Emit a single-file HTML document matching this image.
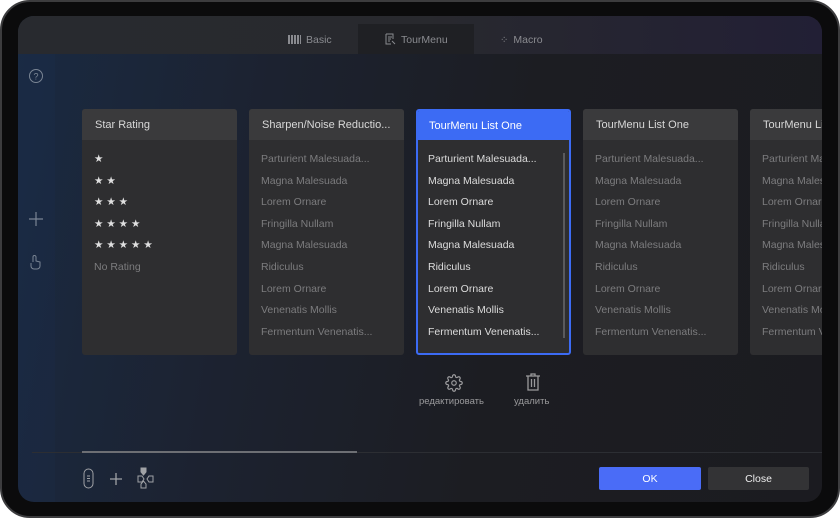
<!DOCTYPE html>
<html><head><meta charset="utf-8"><style>
*{margin:0;padding:0;box-sizing:border-box}
body{width:840px;height:518px;background:#fff;font-family:"Liberation Sans",sans-serif;overflow:hidden;position:relative}
.frame{position:absolute;left:0;top:0;width:840px;height:518px;border-radius:30px;background:#0b0b0c;border:2px solid #3c3c3e}
.screen{position:absolute;left:18px;top:16px;width:804px;height:486px;border-radius:16px;overflow:hidden;background:linear-gradient(100deg,#1a2a42 0%,#1c2230 30%,#1c1d22 60%,#1b1b20 100%)}
.tabbar{position:absolute;left:0;top:0;width:804px;height:38px;background:linear-gradient(90deg,#282a2f 0%,#28292e 50%,#221f35 100%)}
.tab{position:absolute;top:0;height:38px;color:#8a8b90;font-size:10.5px;line-height:48px}
.tab.act{background:#1f2024;top:8px;height:30px;line-height:32px}
.side{position:absolute;left:0;top:38px;width:37px;height:448px;background:rgba(40,70,110,.08)}
.card{position:absolute;top:93px;width:155px;height:246px;background:#2e2e30;border-radius:3px;overflow:hidden}
.card .h{height:31px;background:#3a3a3c;color:#d8d8d8;font-size:11px;line-height:33px;padding-left:13px;white-space:nowrap}
.card ul{list-style:none;padding-top:12px}
.card li{height:21.6px;font-size:10.5px;color:#7c7c7e;padding-left:12px;line-height:14px;white-space:nowrap}
.card.s li{color:#e0e0e0}
.card.a{border:2px solid #3c6bf4}
.card.a .h{background:#3c6bf4;color:#fff;height:29px;line-height:31px;padding-left:11px}
.card.a ul{padding-top:12px}
.card.a li{color:#dcdcdc;padding-left:10px}
.sb{position:absolute;right:4px;top:42px;width:2px;height:185px;background:#5a5a5c}
.btn{position:absolute;top:451px;height:23px;font-size:10.5px;line-height:24px;text-align:center;color:#eee;border-radius:2px}
.lbl{position:absolute;font-size:9.5px;color:#9a9a9c}
</style></head><body>
<div class="frame"></div>
<div class="screen">
 <div class="tabbar"></div>
 <div class="tab" style="left:270px"><span style="display:inline-block;width:13px;height:9px;background:repeating-linear-gradient(90deg,#8a8b90 0 2px,transparent 2px 3px);margin-right:5px;vertical-align:-1px"></span>Basic</div>
 <div class="tab act" style="left:340px;width:116px;padding-left:26px"><svg width="12" height="12" viewBox="0 0 12 12" style="vertical-align:-2px;margin-right:5px"><path d="M2 1h7v5M2 1v10h5M4 4h4M4 6h3M4 8h2M8 8l3 3" stroke="#8a8b90" fill="none"/></svg>TourMenu</div>
 <div class="tab" style="left:482px"><span style="color:#8a8b90;font-size:10px;margin-right:5px">⁘</span>Macro</div>
 <div class="side"></div>
 <svg style="position:absolute;left:10px;top:52px" width="16" height="16"><circle cx="8" cy="8" r="6.5" stroke="#7a8594" fill="none"/><text x="8" y="11.5" font-size="9" fill="#7a8594" text-anchor="middle" font-family="Liberation Sans">?</text></svg>
 <svg style="position:absolute;left:11px;top:196px" width="14" height="14"><path d="M7 0v14M0 7h14" stroke="#7a8594" stroke-width="1.2"/></svg>
 <svg style="position:absolute;left:11px;top:238px" width="14" height="16"><path d="M4 8V3a1.5 1.5 0 013 0v4l4 1v4a3 3 0 01-3 3H5a3 3 0 01-3-3V9" stroke="#7a8594" fill="none"/></svg>

 <div class="card s" style="left:64px"><div class="h">Star Rating</div><ul><li>★</li><li>★ ★</li><li>★ ★ ★</li><li>★ ★ ★ ★</li><li>★ ★ ★ ★ ★</li><li style="color:#7c7c7e">No Rating</li></ul></div>
 <div class="card" style="left:231px"><div class="h">Sharpen/Noise Reductio...</div><ul><li>Parturient Malesuada...</li><li>Magna Malesuada</li><li>Lorem Ornare</li><li>Fringilla Nullam</li><li>Magna Malesuada</li><li>Ridiculus</li><li>Lorem Ornare</li><li>Venenatis Mollis</li><li>Fermentum Venenatis...</li></ul></div>
 <div class="card a" style="left:398px"><div class="h">TourMenu List One</div><ul><li>Parturient Malesuada...</li><li>Magna Malesuada</li><li>Lorem Ornare</li><li>Fringilla Nullam</li><li>Magna Malesuada</li><li>Ridiculus</li><li>Lorem Ornare</li><li>Venenatis Mollis</li><li>Fermentum Venenatis...</li></ul><div class="sb"></div></div>
 <div class="card" style="left:565px"><div class="h">TourMenu List One</div><ul><li>Parturient Malesuada...</li><li>Magna Malesuada</li><li>Lorem Ornare</li><li>Fringilla Nullam</li><li>Magna Malesuada</li><li>Ridiculus</li><li>Lorem Ornare</li><li>Venenatis Mollis</li><li>Fermentum Venenatis...</li></ul></div>
 <div class="card" style="left:732px"><div class="h">TourMenu List One</div><ul><li>Parturient Malesuada...</li><li>Magna Malesuada</li><li>Lorem Ornare</li><li>Fringilla Nullam</li><li>Magna Malesuada</li><li>Ridiculus</li><li>Lorem Ornare</li><li>Venenatis Mollis</li><li>Fermentum Venenatis...</li></ul></div>

 <svg style="position:absolute;left:427px;top:358px" width="18" height="18" viewBox="0 0 24 24"><circle cx="12" cy="12" r="3" stroke="#9a9a9c" stroke-width="1.6" fill="none"/><path d="M19.4 15a1.65 1.65 0 00.33 1.82l.06.06a2 2 0 11-2.830 2.830l-.06-.06a1.65 1.65 0 00-1.82-.33 1.65 1.65 0 00-1 1.51V21a2 2 0 11-4 0v-.09A1.65 1.65 0 009 19.4a1.65 1.65 0 00-1.82.33l-.06.06a2 2 0 11-2.83-2.83l.06-.06A1.65 1.65 0 004.68 15a1.65 1.65 0 00-1.51-1H3a2 2 0 110-4h.09A1.65 1.65 0 004.6 9a1.65 1.65 0 00-.33-1.82l-.06-.06a2 2 0 112.83-2.83l.06.06A1.65 1.65 0 009 4.68a1.65 1.65 0 001-1.51V3a2 2 0 114 0v.09a1.65 1.65 0 001 1.51 1.65 1.65 0 001.82-.33l.06-.06a2 2 0 112.83 2.83l-.06.06A1.65 1.65 0 0019.4 9a1.65 1.65 0 001.51 1H21a2 2 0 110 4h-.09a1.65 1.65 0 00-1.51 1z" stroke="#9a9a9c" stroke-width="1.6" fill="none"/></svg>
 <div class="lbl" style="left:401px;top:380px">редактировать</div>
 <svg style="position:absolute;left:507px;top:357px" width="16" height="18" viewBox="0 0 16 18"><path d="M1 3h14M6 3V1h4v2M3 3v14h10V3M6.5 6v8M9.5 6v8" stroke="#9a9a9c" stroke-width="1.3" fill="none"/></svg>
 <div class="lbl" style="left:496px;top:380px">удалить</div>

 <div style="position:absolute;left:14px;top:436px;width:790px;height:1px;background:#2c2e33"></div>
 <div style="position:absolute;left:64px;top:435px;width:275px;height:2px;background:#6d6f74"></div>
 <svg style="position:absolute;left:64px;top:451px" width="90" height="24"><rect x="2" y="2" width="9" height="19" rx="4.5" stroke="#a0a2a6" fill="none"/><path d="M5 9h3M5 11.5h3M5 14h3" stroke="#a0a2a6"/><path d="M34 6v12M28 12h12" stroke="#a0a2a6" stroke-width="1.3"/><path d="M59 1h5v4l-2.5 3-2.5-3zM56 9h4l2 3-2 3h-4zM67 9h4v6h-4l-2-3zM59 17l2.5-3 2.5 3v4h-5z" stroke="#a0a2a6" fill="none"/><path d="M59 1h5v4l-2.5 3-2.5-3z" fill="#a0a2a6"/></svg>
 <div class="btn" style="left:581px;width:102px;background:#4a6cf7;color:#fff">OK</div>
 <div class="btn" style="left:690px;width:101px;background:#333335">Close</div>
</div>
</body></html>
